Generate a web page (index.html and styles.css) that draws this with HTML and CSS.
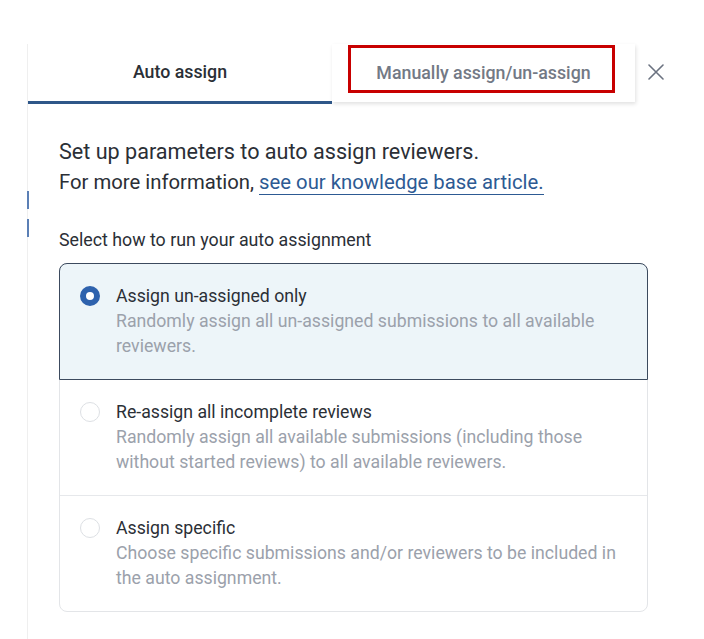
FILE: index.html
```html
<!DOCTYPE html>
<html lang="en">
<head>
<meta charset="utf-8">
<title>Auto assign</title>
<link rel="stylesheet" href="styles.css">
</head>
<body>
<div class="panel">
  <span class="scroll-mark mark-a"></span>
  <span class="scroll-mark mark-b"></span>
  <div class="tabs">
    <div class="tab tab-active">Auto assign</div>
    <div class="tab tab-other">Manually assign/un-assign<span class="highlight-box"></span></div>
    <button class="close" aria-label="Close">
      <svg width="16" height="16" viewBox="0 0 16 16"><path d="M1 1L15 15M15 1L1 15" stroke="#6b7280" stroke-width="1.6" fill="none" stroke-linecap="round"/></svg>
    </button>
  </div>
  <div class="content">
    <p class="intro"><span class="intro-line intro-first">Set up parameters to auto assign reviewers.</span><span class="intro-line intro-second">For more information, <a href="#" class="link">see our knowledge base article.</a></span></p>
    <p class="label">Select how to run your auto assignment</p>
    <div class="options">
      <div class="option option-selected">
        <span class="radio radio-checked"></span>
        <div class="option-text">
          <div class="option-title">Assign un-assigned only</div>
          <div class="option-desc">Randomly assign all un-assigned submissions to all available reviewers.</div>
        </div>
      </div>
      <div class="option">
        <span class="radio"></span>
        <div class="option-text">
          <div class="option-title">Re-assign all incomplete reviews</div>
          <div class="option-desc">Randomly assign all available submissions (including those without started reviews) to all available reviewers.</div>
        </div>
      </div>
      <div class="option option-last">
        <span class="radio"></span>
        <div class="option-text">
          <div class="option-title">Assign specific</div>
          <div class="option-desc">Choose specific submissions and/or reviewers to be included in the auto assignment.</div>
        </div>
      </div>
    </div>
  </div>
</div>
</body>
</html>
```
FILE: styles.css
```css
* { box-sizing: border-box; }
html, body { margin: 0; padding: 0; background: #fff; }
body {
  font-family: Roboto, "Liberation Sans", Arial, sans-serif;
  color: #2b2f36;
  height: 639px;
  overflow: hidden;
}
.panel {
  position: relative;
  margin: 44px 0 0 27px;
  border-left: 1px solid #efefef;
  height: 595px;
}
.scroll-mark {
  position: absolute;
  left: -1px;
  width: 2px;
  background: #5b7fb5;
}
.mark-a { top: 147px; height: 18px; }
.mark-b { top: 175px; height: 18px; }
.tabs {
  display: flex;
  align-items: flex-start;
  height: 60px;
}
.tab {
  height: 60px;
  display: flex;
  align-items: center;
  justify-content: center;
  font-size: 17.8px;
  padding-bottom: 3px;
}
.tab-active {
  width: 304px;
  font-weight: 500;
  color: #2b2f36;
  border-bottom: 3px solid #2e5789;
}
.tab-other {
  position: relative;
  width: 303px;
  height: 58px;
  padding-bottom: 1px;
  color: #737985;
  font-weight: 500;
  background: #fff;
  box-shadow: 1px 2px 4px rgba(0, 0, 0, 0.12);
}
.highlight-box {
  position: absolute;
  left: 16px;
  top: 1px;
  width: 267px;
  height: 48px;
  border: 3px solid #c80000;
}
.close {
  margin-left: 13px;
  margin-top: 20px;
  width: 16px;
  height: 16px;
  padding: 0;
  border: 0;
  background: none;
  display: flex;
}
.content {
  padding: 32px 0 0 31px;
}
.intro {
  margin: 0;
  line-height: 31px;
  color: #2b2f36;
}
.intro-line { display: block; }
.intro-first { font-size: 21.6px; }
.intro-second { font-size: 20.3px; }
.link {
  color: #2d5a93;
  text-decoration: none;
  border-bottom: 1.5px solid #2d5a93;
}
.label {
  margin: 30px 0 11px;
  font-size: 17.8px;
  line-height: 24px;
  color: #2b2f36;
}
.options {
  width: 589px;
  border: 1px solid #e3e5e8;
  border-radius: 8px;
}
.option {
  display: flex;
  align-items: flex-start;
  gap: 16px;
  padding: 20px;
  border-bottom: 1px solid #e6e8eb;
}
.option-last { border-bottom: 0; }
.option-selected {
  background: #edf5f9;
  border: 1px solid #3c4a5e;
  border-radius: 8px 8px 0 0;
  margin: -1px -1px 0 -1px;
  padding: 20px;
}
.radio {
  flex: none;
  width: 20px;
  height: 20px;
  margin-top: 2px;
  border-radius: 50%;
  border: 1.5px solid #dde0e4;
  background: #fff;
}
.radio-checked {
  border: 6.5px solid #2e62ad;
}
.option-text { flex: 1; }
.option-title {
  font-size: 17.7px;
  line-height: 25px;
  color: #2b2f36;
}
.option-desc {
  font-size: 17.7px;
  line-height: 25px;
  color: #9ba1ab;
}
```
